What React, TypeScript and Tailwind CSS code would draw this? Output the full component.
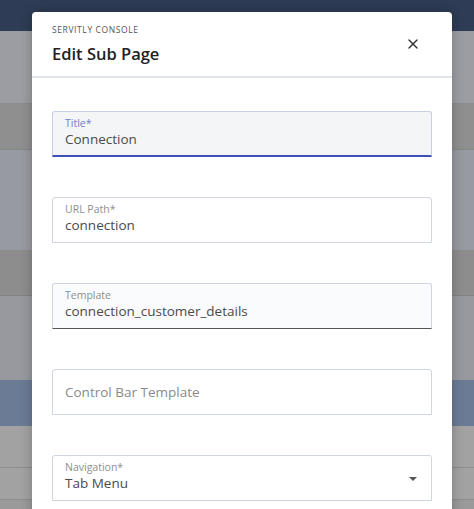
import { X } from 'lucide-react';

type Field = {
  label?: string;
  value?: string;
  placeholder?: string;
  variant: 'focused' | 'plain' | 'filled' | 'select';
};

const fields: Field[] = [
  { label: 'Title*', value: 'Connection', variant: 'focused' },
  { label: 'URL Path*', value: 'connection', variant: 'plain' },
  { label: 'Template', value: 'connection_customer_details', variant: 'filled' },
  { placeholder: 'Control Bar Template', variant: 'plain' },
  { label: 'Navigation*', value: 'Tab Menu', variant: 'select' },
];

const rows = [
  'h-[31px] bg-[#2e3d55]',
  'h-[73px] bg-[#9b9da2] border-b border-[#8a8b90]',
  'h-[46px] bg-[#8f8f90] border-b border-[#85868a]',
  'h-[100px] bg-[#989aa1]',
  'h-[46px] bg-[#8d8d8e] border-b border-[#828387]',
  'h-[84px] bg-[#97999f]',
  'h-[46px] bg-[#6b7b95]',
  'h-[42px] bg-[#a2a2a3] border-b border-[#8e8e8f]',
  'h-[32px] bg-[#a2a2a3] border-b border-[#8e8e8f]',
  'h-[20px] bg-[#9a9a9b]',
];

function FormField({ f }: { f: Field }) {
  const box =
    f.variant === 'focused'
      ? 'bg-[#f4f5f7] border border-[#c9cfe2] border-b-2 border-b-[#3f4fb8]'
      : f.variant === 'filled'
        ? 'bg-[#fafbfc] border border-[#cfd5e2] border-b-[#555]'
        : 'bg-white border border-[#cfd5e2]';
  const labelColor = f.variant === 'focused' ? 'text-[#6f7bd0]' : 'text-[#8e8e8e]';

  return (
    <div className={`relative h-[46px] rounded-t-[3px] ${box} px-[12px] flex flex-col justify-center`}>
      {f.label ? (
        <>
          <div className={`text-[10.5px] leading-[12px] ${labelColor} -mt-[1px]`}>{f.label}</div>
          <div className="text-[13.5px] leading-[21px] text-[#4a4a4a]">{f.value}</div>
        </>
      ) : (
        <div className="text-[13.5px] leading-[20px] text-[#8a8a8a]">{f.placeholder}</div>
      )}
      {f.variant === 'select' && (
        <div className="absolute right-[14px] top-[21px] w-0 h-0 border-l-[4px] border-r-[4px] border-t-[4px] border-l-transparent border-r-transparent border-t-[#555]" />
      )}
    </div>
  );
}

export default function App() {
  return (
    <div className="relative w-[474px] h-[509px] overflow-hidden" style={{ fontFamily: '"Open Sans", "Noto Sans", sans-serif' }}>
      {/* dimmed page behind */}
      <div className="flex flex-col">
        {rows.map((r, i) => (
          <div key={i} className={r} />
        ))}
      </div>

      {/* modal */}
      <div className="absolute left-[32px] top-[12px] w-[420px] h-[520px] bg-white rounded-[4px] shadow-[0_0_12px_rgba(0,0,0,0.25)]">
        <div className="relative h-[66px] pl-5 pt-[12px] border-b-2 border-[#dfe4ea]">
          <div className="text-[8.5px] leading-[12px] tracking-[0.6px] text-[#555]">SERVITLY CONSOLE</div>
          <div className="mt-[6px] text-[16.5px] leading-[24px] font-semibold text-[#222]">Edit Sub Page</div>
          <button className="absolute right-[27px] top-[20px] w-6 h-6 flex items-center justify-center text-[#333]">
            <X size={16} strokeWidth={2} />
          </button>
        </div>
        <div className="px-5 pt-[33px] flex flex-col gap-[40px]">
          {fields.map((f, i) => (
            <FormField key={i} f={f} />
          ))}
        </div>
      </div>
    </div>
  );
}
